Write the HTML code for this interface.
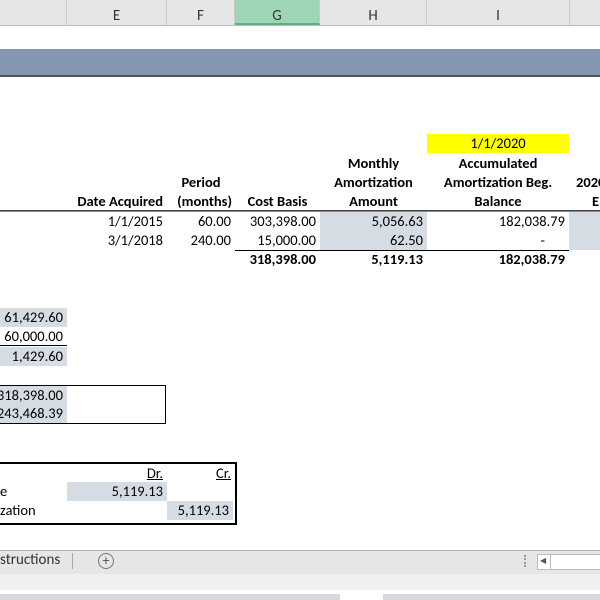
<!DOCTYPE html><html><head><style>
body{margin:0;width:600px;height:600px;overflow:hidden;background:#fff;font-family:Calibri,"Liberation Sans",sans-serif;font-size:14.5px;color:#000;position:relative}
.a{position:absolute}
.hd{top:0;height:25px;background:#e6e6e6;border-bottom:1px solid #bdbdbd;width:600px}
.col{position:absolute;top:0;height:25px;text-align:center;line-height:32px;font-size:15px;color:#333;border-right:1px solid #c8c8c8;box-sizing:border-box}
.r{text-align:right}.c{text-align:center}.b{font-weight:bold}
.g{background:#d6dce4}
.t{position:absolute;height:19px;line-height:19px;box-sizing:border-box;padding:0 4px;white-space:nowrap}
.l{direction:rtl;overflow:hidden;padding:0 4px 0 0}
</style></head><body>
<div class="a hd"></div>
<div class="col" style="left:0;width:67px"></div>
<div class="col" style="left:67px;width:100px">E</div>
<div class="col" style="left:167px;width:68px">F</div>
<div class="col" style="left:235px;width:85px;background:#9fd5b7;border-bottom:2px solid #5fae84">G</div>
<div class="col" style="left:320px;width:107px">H</div>
<div class="col" style="left:427px;width:143px">I</div>
<div class="a" style="top:49px;left:0;width:600px;height:26px;background:#8496b0;border-bottom:2px solid #44546a"></div>

<div class="t c" style="left:427px;top:134px;width:142px;background:#ffff00">1/1/2020</div>
<div class="t c b" style="left:320px;top:154px;width:107px">Monthly</div>
<div class="t c b" style="left:427px;top:154px;width:142px">Accumulated</div>
<div class="t c b" style="left:167px;top:173px;width:68px">Period</div>
<div class="t c b" style="left:320px;top:173px;width:107px">Amortization</div>
<div class="t c b" style="left:427px;top:173px;width:142px">Amortization Beg.</div>
<div class="t b" style="left:572px;top:173px">2020</div>
<div class="t r b" style="left:30px;top:192px;width:137px">Date Acquired</div>
<div class="t r b" style="left:160px;top:192px;width:75px;padding-right:3px">(months)</div>
<div class="t c b" style="left:235px;top:192px;width:85px">Cost Basis</div>
<div class="t c b" style="left:320px;top:192px;width:107px">Amount</div>
<div class="t c b" style="left:427px;top:192px;width:142px">Balance</div>
<div class="t b" style="left:588px;top:192px">E</div>
<div class="a" style="left:0;top:210px;width:600px;height:1px;background:#444;border-bottom:1px solid #888"></div>

<div class="t r" style="left:67px;top:212px;width:100px">1/1/2015</div>
<div class="t r" style="left:167px;top:212px;width:68px">60.00</div>
<div class="t r" style="left:235px;top:212px;width:85px">303,398.00</div>
<div class="t r g" style="left:320px;top:212px;width:107px">5,056.63</div>
<div class="t r" style="left:427px;top:212px;width:142px">182,038.79</div>
<div class="t g" style="left:569px;top:212px;width:31px;height:38px"></div>
<div class="t r" style="left:67px;top:231px;width:100px">3/1/2018</div>
<div class="t r" style="left:167px;top:231px;width:68px">240.00</div>
<div class="t r" style="left:235px;top:231px;width:85px">15,000.00</div>
<div class="t r g" style="left:320px;top:231px;width:107px">62.50</div>
<div class="t r" style="left:427px;top:231px;width:142px;padding-right:24px">-</div>
<div class="a" style="left:235px;top:250px;width:334px;height:1px;background:#000"></div>
<div class="t r b" style="left:235px;top:250px;width:85px">318,398.00</div>
<div class="t r b" style="left:320px;top:250px;width:107px">5,119.13</div>
<div class="t r b" style="left:427px;top:250px;width:142px">182,038.79</div>

<div class="t r g l" style="left:0;top:308px;width:67px">61,429.60</div>
<div class="t r l" style="left:0;top:327px;width:67px;border-bottom:1px solid #000">60,000.00</div>
<div class="t r g l" style="left:0;top:347px;width:67px">1,429.60</div>

<div class="a" style="left:-2px;top:385px;width:166px;height:37px;border:1px solid #000"></div>
<div class="t r g l" style="left:0;top:386px;width:67px"><span dir="ltr">318,398.00</span></div>
<div class="t r g l" style="left:0;top:404px;width:67px"><span dir="ltr">243,468.39</span></div>

<div class="a" style="left:-3px;top:462px;width:236px;height:59px;border:2px solid #000"></div>
<div class="t r" style="left:67px;top:464px;width:100px"><u>Dr.</u></div>
<div class="t r" style="left:167px;top:464px;width:68px"><u>Cr.</u></div>
<div class="t" style="left:-4px;top:482px">e</div>
<div class="t r g" style="left:67px;top:482px;width:100px">5,119.13</div>
<div class="t" style="left:-4px;top:501px">zation</div>
<div class="t r g" style="left:167px;top:501px;width:66px">5,119.13</div>

<div class="a" style="left:0;top:550px;width:600px;height:23px;background:#e6e6e6;border-top:1px solid #b5b5b5;border-bottom:1px solid #c8c8c8"></div>
<div class="a" style="left:0;top:550px;font-size:15px;line-height:20px;color:#333">structions</div>
<div class="a" style="left:72px;top:553px;width:1px;height:16px;background:#aaa"></div>
<div class="a" style="left:98px;top:553px;width:14px;height:14px;border:1px solid #777;border-radius:50%;text-align:center;line-height:14px;color:#555;font-size:14px">+</div>
<div class="a" style="left:524px;top:555px;width:1px;height:12px;border-left:2px dotted #999"></div>
<div class="a" style="left:537px;top:554px;width:63px;height:14px;background:#fff;border:1px solid #bbb"></div>
<div class="a" style="left:540px;top:554px;font-size:8px;line-height:14px;color:#555">◀</div>
<div class="a" style="left:550px;top:554px;width:1px;height:15px;background:#bbb"></div>
<div class="a" style="left:0;top:574px;width:600px;height:16px;background:#f0f0f0"></div>
<div class="a" style="left:0;top:594px;width:340px;height:6px;background:#d8d8dc"></div>
<div class="a" style="left:383px;top:594px;width:217px;height:6px;background:#d8d8dc"></div>
</body></html>
